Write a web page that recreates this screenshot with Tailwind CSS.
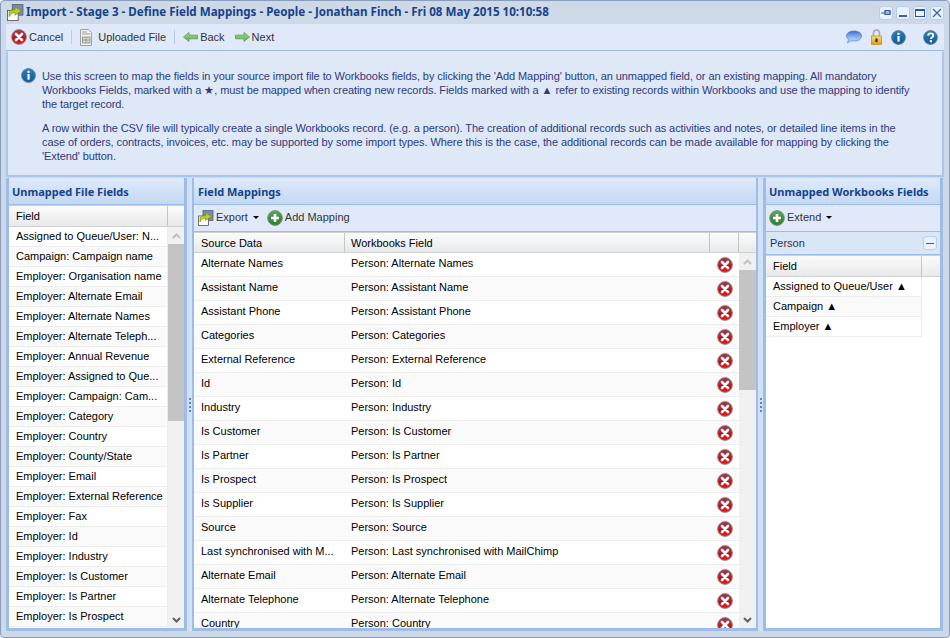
<!DOCTYPE html>
<html lang="en">
<head>
    <meta charset="UTF-8">
    <title>Import - Stage 3 - Define Field Mappings</title>
    <script src="https://cdn.jsdelivr.net/npm/@tailwindcss/browser@4"></script>
</head>
<body class="w-[950px] h-[638px] overflow-hidden font-['Liberation_Sans',sans-serif] text-[11px]">

    <!-- shared icons -->
    <svg class="absolute w-0 h-0">
        <defs>
            <linearGradient id="redFill" x1="0" y1="0" x2="0" y2="1"><stop offset="0" stop-color="#a8343c"/><stop offset="0.5" stop-color="#b5222a"/><stop offset="0.55" stop-color="#d3060f"/><stop offset="1" stop-color="#d8222a"/></linearGradient>
            <linearGradient id="blueFill" x1="0" y1="0" x2="0" y2="1"><stop offset="0" stop-color="#2a7fb8"/><stop offset="0.5" stop-color="#1a6ea8"/><stop offset="1" stop-color="#0f5f9a"/></linearGradient>
            <linearGradient id="greenFill" x1="0" y1="0" x2="0" y2="1"><stop offset="0" stop-color="#5fa85f"/><stop offset="0.5" stop-color="#3f8d3f"/><stop offset="1" stop-color="#2f7f35"/></linearGradient>
            <linearGradient id="arrowFill" x1="0" y1="0" x2="0" y2="1"><stop offset="0" stop-color="#a8dc8c"/><stop offset="1" stop-color="#5fae52"/></linearGradient>
            <linearGradient id="bubbleFill" x1="0" y1="0" x2="0" y2="1"><stop offset="0" stop-color="#3f6fd0"/><stop offset="0.6" stop-color="#9cc0f5"/><stop offset="1" stop-color="#c8dcfa"/></linearGradient>
            <linearGradient id="lockFill" x1="0" y1="0" x2="0" y2="1"><stop offset="0" stop-color="#f8dc70"/><stop offset="1" stop-color="#dc9a18"/></linearGradient>
            <symbol id="iconDelete" viewBox="0 0 16 16">
                <circle cx="8" cy="8" r="7.4" fill="url(#redFill)" stroke="#8a8a8a" stroke-width="0.9"/>
                <path d="M5 5l6 6M11 5l-6 6" stroke="#fff" stroke-width="2.6" stroke-linecap="round"/>
            </symbol>
            <symbol id="iconAdd" viewBox="0 0 16 16">
                <circle cx="8" cy="8" r="7.4" fill="url(#greenFill)" stroke="#7f8f7f" stroke-width="0.9"/>
                <path d="M8 4v8M4 8h8" stroke="#fff" stroke-width="2.6"/>
            </symbol>
            <symbol id="iconInfo" viewBox="0 0 16 16">
                <circle cx="8" cy="8" r="7.4" fill="url(#blueFill)" stroke="#6d7f8d" stroke-width="0.9"/>
                <rect x="6.9" y="3" width="2.3" height="2.2" fill="#fff"/>
                <rect x="6.9" y="6.4" width="2.3" height="6" fill="#fff"/>
            </symbol>
            <symbol id="iconExport" viewBox="0 0 16 16">
                <rect x="5" y=".5" width="10" height="10" fill="#7a8aa8" stroke="#55607a" stroke-width="0.8"/>
                <rect x=".5" y="6" width="10" height="9.500" fill="#fff" stroke="#555" stroke-width="0.8"/>
                <path d="M2 12V8.500C2 6.500 4 5.500 7.500 5.500V2.500L13.500 6.500 7.500 10.500V8C5 8 3.500 9.500 2 12z" fill="#b5d020" stroke="#6d8a10" stroke-width="0.6"/>
            </symbol>
        </defs>
    </svg>

    <!-- window -->
    <div class="w-[950px] h-[638px] flex flex-col bg-[#ced9e7] border border-[#8a9cbc] rounded-sm">

        <!-- title bar -->
        <div class="h-[23px] shrink-0 flex items-center pl-[6px] pr-[5px]">
            <svg class="w-[17px] h-[17px] mr-[2px]" viewBox="0 0 16 16"><use href="#iconExport"/></svg>
            <span class="font-['Noto_Sans',sans-serif] font-bold text-[11.6px] pb-px text-[#15428b] whitespace-nowrap">Import - Stage 3 - Define Field Mappings - People - Jonathan Finch - Fri 08 May 2015 10:10:58</span>
            <div class="ml-auto flex gap-[3px]">
                <div class="w-[14px] h-[14px] rounded-[3px] border border-[#b4cdf0] bg-[#e9f1fd] flex items-center justify-center">
                    <svg width="12" height="10" viewBox="0 0 12 10"><path d="M1 5h4M5 2.5h5v4H5zM5 2v5M10 2v5" fill="#9fb6dc" stroke="#3a5fa8" stroke-width="1"/></svg>
                </div>
                <div class="w-[14px] h-[14px] rounded-[3px] border border-[#b4cdf0] bg-[#e9f1fd] flex items-end justify-center pb-[2px]">
                    <div class="w-[8px] h-[2px] bg-[#3a5fa8]"></div>
                </div>
                <div class="w-[14px] h-[14px] rounded-[3px] border border-[#b4cdf0] bg-[#e9f1fd] flex items-center justify-center">
                    <div class="w-[10px] h-[8px] border border-t-2 border-[#2f52a0]"></div>
                </div>
                <div class="w-[14px] h-[14px] rounded-[3px] border border-[#b4cdf0] bg-[#e9f1fd] flex items-center justify-center">
                    <svg width="10" height="10" viewBox="0 0 10 10"><path d="M1 1l8 8M9 1l-8 8" stroke="#3a5fa8" stroke-width="1.2"/></svg>
                </div>
            </div>
        </div>

        <!-- main toolbar -->
        <div class="h-[27px] shrink-0 mx-[5px] bg-[#dfe9fa] border-b border-[#99bce8] flex items-center pl-[5px] text-[#333] whitespace-nowrap">
            <svg class="w-[16px] h-[16px]"><use href="#iconDelete"/></svg>
            <span class="ml-[2px]">Cancel</span>
            <div class="w-px h-[14px] bg-[#b6cdeb] ml-[8px] mr-[6px]"></div>
            <svg class="w-[16px] h-[17px]" viewBox="0 0 16 17"><path d="M2.5 .5h8l3 3v13h-11z" fill="#f2f2ee" stroke="#a0a0a0"/><path d="M4 3h5M4 5h8" stroke="#999"/><rect x="4.5" y="8" width="7.5" height="6" fill="#d8d8d4" stroke="#888" stroke-width=".8"/><path d="M4.5 11h7.5M8 8v6" stroke="#888" stroke-width=".7"/></svg>
            <span class="ml-[4px]">Uploaded File</span>
            <div class="w-px h-[14px] bg-[#b6cdeb] ml-[8px] mr-[8px]"></div>
            <svg class="w-[15px] h-[10px]" viewBox="0 0 15 10"><path d="M.5 5L6 .5v2.7h8.5v3.6H6v2.7z" fill="url(#arrowFill)" stroke="#5a9a50" stroke-width=".8"/></svg>
            <span class="ml-[2px]">Back</span>
            <svg class="w-[15px] h-[10px] ml-[10px]" viewBox="0 0 15 10"><path d="M14.5 5L9 .5v2.7H.5v3.6H9v2.7z" fill="url(#arrowFill)" stroke="#5a9a50" stroke-width=".8"/></svg>
            <span class="ml-[2px]">Next</span>

            <div class="ml-auto flex items-center pr-[6px]">
                <svg class="w-[16px] h-[15px]" viewBox="0 0 16 15"><path d="M8 1c4 0 7.5 1.600 7.500 5S12 11 8 11c-1 0-2 0-3-.3L1.500 13 2.500 9.500C1 8.500.5 7.500.5 6 .5 2.600 4 1 8 1z" fill="url(#bubbleFill)" stroke="#5b7fb8" stroke-width=".7"/></svg>
                <svg class="w-[11px] h-[16px] ml-[9px]" viewBox="0 0 11 16"><path d="M2.500 7V4a3 3 0 0 1 6 0v3" fill="none" stroke="#a8a8a8" stroke-width="1.600"/><rect x=".5" y="7" width="10" height="8.500" fill="url(#lockFill)" stroke="#b98a20" stroke-width=".7"/><rect x="4.500" y="9.500" width="2" height="3.500" fill="#222"/></svg>
                <svg class="w-[15px] h-[15px] ml-[9px]"  viewBox="0 0 16 16"><use href="#iconInfo"/></svg>
                <svg class="w-[15px] h-[15px] ml-[17px]" viewBox="0 0 16 16">
                    <circle cx="8" cy="8" r="7.400" fill="url(#blueFill)" stroke="#6d7f8d" stroke-width=".9"/>
                    <path d="M5.500 6c0-3.200 5.500-3.200 5.500-.2 0 2-2.500 1.800-2.500 3.700" fill="none" stroke="#fff" stroke-width="2"/>
                    <rect x="7.300" y="10.800" width="2.300" height="2.300" fill="#fff"/>
                </svg>
            </div>
        </div>

        <!-- description -->
        <div class="h-[126px] shrink-0 ml-[5px] mr-[5px] bg-[#dfe8f6] border-x-2 border-b-2 border-[#a9c6ee] border-t border-t-[#dfe8f6] flex text-[#2c3a7c]">
            <svg class="w-[15px] h-[15px] ml-[13px] mt-[16px] shrink-0" viewBox="0 0 16 16"><use href="#iconInfo"/></svg>
            <div class="ml-[6px] pt-[18px] leading-[13.75px] tracking-[-0.08px] whitespace-nowrap">
                <p>Use this screen to map the fields in your source import file to Workbooks fields, by clicking the 'Add Mapping' button, an unmapped field, or an existing mapping. All mandatory<br>Workbooks Fields, marked with a ★, must be mapped when creating new records. Fields marked with a ▲ refer to existing records within Workbooks and use the mapping to identify<br>the target record.</p>
                <p class="mt-[11px]">A row within the CSV file will typically create a single Workbooks record. (e.g. a person). The creation of additional records such as activities and notes, or detailed line items in the<br>case of orders, contracts, invoices, etc. may be supported by some import types. Where this is the case, the additional records can be made available for mapping by clicking the<br>'Extend' button.</p>
            </div>
        </div>

        <!-- three panels -->
        <div class="h-[453px] shrink-0 mt-px ml-[5px] flex">

            <!-- left -->
            <section class="w-[181px] shrink-0 flex flex-col border-x-[3px] border-b-[3px] border-[#9dbde8] overflow-hidden">
                <h2 class="h-[27px] shrink-0 -mx-[2px] pl-[5px] pt-[3px] flex items-center font-['Noto_Sans',sans-serif] font-bold text-[11px] text-[#15428b] bg-gradient-to-b from-[#dfeafa] to-[#c3d8f2] border-b border-[#99bce8] whitespace-nowrap">Unmapped File Fields</h2>
                <div class="flex-1 min-h-0 flex flex-col bg-white overflow-hidden">
                    <div class="h-[22px] shrink-0 flex bg-gradient-to-b from-[#fbfbfb] to-[#e8e9eb] border-y border-[#d0d0d0] text-black">
                        <div class="w-[159px] border-r border-[#c5c5c5] pl-[7px] flex items-center">Field</div>
                    </div>
                    <div class="flex-1 min-h-0 flex overflow-hidden">
                        <div id="fileRows" class="w-[159px] shrink-0"></div>
                        <div class="relative flex-1 bg-[#f0f0f0]">
                            <div class="absolute left-0 right-0 top-[17px] h-[177px] bg-[#c4c4c4]"></div>
                            <svg class="absolute left-[4px] top-[6px]" width="9" height="6" viewBox="0 0 9 6"><path d="M1 5l3.500-3.500L8 5" fill="none" stroke="#c0c0c0" stroke-width="2"/></svg>
                            <svg class="absolute left-[4px] bottom-[5px]" width="9" height="6" viewBox="0 0 9 6"><path d="M1 1l3.500 3.500L8 1" fill="none" stroke="#606060" stroke-width="2"/></svg>
                        </div>
                    </div>
                </div>
            </section>

            <!-- splitter -->
            <div class="w-[5px] shrink-0 bg-[#d3e1f5] flex items-center justify-center">
                <div class="w-[2px] h-[14px] border-l-2 border-dotted border-[#5f84b8]"></div>
            </div>

            <!-- middle -->
            <section class="w-[566px] shrink-0 flex flex-col border-x-[2px] border-b-[3px] border-[#9dbde8] overflow-hidden">
                <h2 class="h-[27px] shrink-0 -mx-[1px] pl-[5px] pt-[3px] flex items-center font-['Noto_Sans',sans-serif] font-bold text-[11px] text-[#15428b] bg-gradient-to-b from-[#dfeafa] to-[#c3d8f2] border-b border-[#99bce8]">Field Mappings</h2>
                <div class="h-[27px] shrink-0 pb-px bg-[#dfe9fa] border-b border-[#99bce8] flex items-center pl-[4px] text-[#333]">
                    <svg class="w-[16px] h-[16px]" viewBox="0 0 16 16"><use href="#iconExport"/></svg>
                    <span class="ml-[2px]">Export</span>
                    <span class="ml-[5px] w-0 h-0 border-x-[3px] border-t-[3px] border-x-transparent border-t-black"></span>
                    <svg class="w-[16px] h-[16px] ml-[8px]" viewBox="0 0 16 16"><use href="#iconAdd"/></svg>
                    <span class="ml-[2px]">Add Mapping</span>
                </div>
                <div class="flex-1 min-h-0 flex flex-col bg-white overflow-hidden">
                    <div class="h-[21px] shrink-0 flex bg-gradient-to-b from-[#fbfbfb] to-[#e8e9eb] border-y border-[#d0d0d0] text-black">
                        <div class="w-[151px] border-r border-[#c5c5c5] pl-[7px] pt-px flex items-center">Source Data</div>
                        <div class="w-[365px] border-r border-[#c5c5c5] pl-[6px] pt-px flex items-center">Workbooks Field</div>
                        <div class="w-[29px] border-r border-[#c5c5c5]"></div>
                    </div>
                    <div class="flex-1 min-h-0 flex overflow-hidden">
                        <div id="mapRows" class="w-[545px] shrink-0"></div>
                        <div class="relative flex-1 bg-[#f0f0f0]">
                            <div class="absolute left-0 right-0 top-[17px] h-[120px] bg-[#c4c4c4]"></div>
                            <svg class="absolute left-[4px] top-[6px]" width="9" height="6" viewBox="0 0 9 6"><path d="M1 5l3.500-3.500L8 5" fill="none" stroke="#c0c0c0" stroke-width="2"/></svg>
                            <svg class="absolute left-[4px] bottom-[5px]" width="9" height="6" viewBox="0 0 9 6"><path d="M1 1l3.500 3.500L8 1" fill="none" stroke="#606060" stroke-width="2"/></svg>
                        </div>
                    </div>
                </div>
            </section>

            <!-- splitter -->
            <div class="w-[5px] shrink-0 bg-[#d3e1f5] flex items-center justify-center">
                <div class="w-[2px] h-[14px] border-l-2 border-dotted border-[#5f84b8]"></div>
            </div>

            <!-- right -->
            <section class="w-[180px] shrink-0 flex flex-col border-x-[3px] border-b-[3px] border-[#9dbde8] overflow-hidden">
                <h2 class="h-[27px] shrink-0 -mx-[2px] pl-[5px] pt-[3px] flex items-center font-['Noto_Sans',sans-serif] font-bold text-[11px] text-[#15428b] bg-gradient-to-b from-[#dfeafa] to-[#c3d8f2] border-b border-[#99bce8] whitespace-nowrap">Unmapped Workbooks Fields</h2>
                <div class="h-[27px] shrink-0 pb-px -mx-[2px] bg-[#dfe9fa] border-b border-[#99bce8] flex items-center pl-[5px] text-[#333]">
                    <svg class="w-[16px] h-[16px]" viewBox="0 0 16 16"><use href="#iconAdd"/></svg>
                    <span class="ml-[2px]">Extend</span>
                    <span class="ml-[5px] w-0 h-0 border-x-[3px] border-t-[3px] border-x-transparent border-t-black"></span>
                </div>
                <div class="h-[23px] shrink-0 bg-[#d9e6f8] border-b border-[#99bce8] flex items-center pl-[4px] pr-[3px] text-[#333]">
                    <span>Person</span>
                    <div class="ml-auto w-[14px] h-[14px] rounded-[3px] border border-[#b4cdf0] bg-[#e9f1fd] flex items-center justify-center">
                        <div class="w-[8px] h-[1px] bg-[#3a5fa8]"></div>
                    </div>
                </div>
                <div class="flex-1 min-h-0 bg-white">
                    <div class="h-[22px] flex bg-gradient-to-b from-[#fbfbfb] to-[#e8e9eb] border-y border-[#d0d0d0] text-black">
                        <div class="w-[156px] border-r border-[#c5c5c5] pl-[7px] flex items-center">Field</div>
                    </div>
                    <div id="wbRows" class="w-[156px]"></div>
                </div>
            </section>
        </div>
    </div>

    <script>
        const fileFields = [
            'Assigned to Queue/User: N...', 'Campaign: Campaign name', 'Employer: Organisation name',
            'Employer: Alternate Email', 'Employer: Alternate Names', 'Employer: Alternate Teleph...',
            'Employer: Annual Revenue', 'Employer: Assigned to Que...', 'Employer: Campaign: Cam...',
            'Employer: Category', 'Employer: Country', 'Employer: County/State', 'Employer: Email',
            'Employer: External Reference', 'Employer: Fax', 'Employer: Id', 'Employer: Industry',
            'Employer: Is Customer', 'Employer: Is Partner', 'Employer: Is Prospect'
        ];
        const mappings = [
            'Alternate Names', 'Assistant Name', 'Assistant Phone', 'Categories', 'External Reference', 'Id',
            'Industry', 'Is Customer', 'Is Partner', 'Is Prospect', 'Is Supplier', 'Source',
            'Last synchronised with MailChimp', 'Alternate Email', 'Alternate Telephone', 'Country'
        ];
        const wbFields = ['Assigned to Queue/User ▲', 'Campaign ▲', 'Employer ▲'];

        const simpleRow = (text, i) => `
            <div class="h-[20px] flex items-center pl-[7px] border-b border-r border-[#ededed] text-black whitespace-nowrap overflow-hidden ${i % 2 ? 'bg-[#fafafa]' : 'bg-white'}">${text}</div>`;

        document.getElementById('fileRows').innerHTML = fileFields.map(simpleRow).join('');
        document.getElementById('wbRows').innerHTML = wbFields.map(simpleRow).join('');

        document.getElementById('mapRows').innerHTML = mappings.map((name, i) => `
            <div class="h-[24px] flex items-center border-b border-[#ededed] text-black ${i % 2 ? 'bg-[#fafafa]' : 'bg-white'}">
                <div class="w-[151px] shrink-0 pl-[7px] pr-[6px] pb-[2px] whitespace-nowrap overflow-hidden">${name === 'Last synchronised with MailChimp' ? 'Last synchronised with M...' : name}</div>
                <div class="w-[365px] shrink-0 pl-[6px] pb-[2px]">Person: ${name}</div>
                <div class="w-[29px] flex justify-center"><svg class="w-[16px] h-[16px]"><use href="#iconDelete"/></svg></div>
            </div>`).join('');
    </script>
</body>
</html>
